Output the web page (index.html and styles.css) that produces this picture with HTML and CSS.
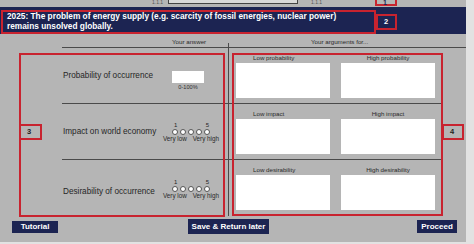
FILE: index.html
```html
<!DOCTYPE html>
<html>
<head>
<meta charset="utf-8">
<link rel="stylesheet" href="styles.css">
</head>
<body>
<div class="page">
  <div class="prev">
    <span class="prev-dots">1.1.1</span>
    <span class="prev-box"></span>
    <span class="prev-dots">1.1.1</span>
  </div>
  <div class="banner">
    <p class="question">2025: The problem of energy supply (e.g. scarcity of fossil energies, nuclear power)<br>remains unsolved globally.</p>
  </div>
  <div class="main">
    <div class="head head-left">Your answer</div>
    <div class="divider"></div>
    <div class="head head-right">Your arguments for...</div>

    <div class="answers">
      <div class="row r1">
        <span class="label">Probability of occurrence</span>
        <div class="widget">
          <div class="pct-box"></div>
          <div class="pct-label">0-100%</div>
        </div>
      </div>
      <div class="row r2">
        <span class="label">Impact on world economy</span>
        <div class="widget scale">
          <div class="ends"><span>1</span><span>5</span></div>
          <div class="dots"><i></i><i></i><i></i><i></i><i></i></div>
          <div class="names"><span>Very low</span><span>Very high</span></div>
        </div>
      </div>
      <div class="row r3">
        <span class="label">Desirability of occurrence</span>
        <div class="widget scale">
          <div class="ends"><span>1</span><span>5</span></div>
          <div class="dots"><i></i><i></i><i></i><i></i><i></i></div>
          <div class="names"><span>Very low</span><span>Very high</span></div>
        </div>
      </div>
    </div>

    <div class="args">
      <div class="arow">
        <div class="acell"><div class="alabel lo">Low probability</div><div class="abox"></div></div>
        <div class="acell"><div class="alabel hi">High probability</div><div class="abox"></div></div>
      </div>
      <div class="arow">
        <div class="acell"><div class="alabel lo">Low impact</div><div class="abox"></div></div>
        <div class="acell"><div class="alabel hi">High impact</div><div class="abox"></div></div>
      </div>
      <div class="arow last">
        <div class="acell"><div class="alabel lo">Low desirability</div><div class="abox"></div></div>
        <div class="acell"><div class="alabel hi">High desirability</div><div class="abox"></div></div>
      </div>
    </div>
  </div>
  <div class="footer">
    <button class="btn btn-tutorial">Tutorial</button>
    <button class="btn btn-save">Save &amp; Return later</button>
    <button class="btn btn-proceed">Proceed</button>
  </div>

  <div class="anno anno-top"><span>1</span></div>
  <div class="anno anno-question"></div>
  <div class="anno tag tag-2">2</div>
  <div class="anno anno-left"></div>
  <div class="anno anno-right"></div>
  <div class="anno tag tag-3">3</div>
  <div class="anno tag tag-4">4</div>
</div>
</body>
</html>
```

FILE: styles.css
```css
html, body {
  margin: 0;
  padding: 0;
}
body {
  width: 474px;
  height: 244px;
  background: #e2e2e2;
  font-family: "Liberation Sans", Arial, sans-serif;
  color: #262626;
  overflow: hidden;
}
.page {
  position: relative;
  width: 466px;
  height: 242px;
  background: #b5b5b5;
  overflow: hidden;
}

/* partial previous row */
.prev {
  height: 7px;
  display: flex;
  align-items: flex-start;
  font-size: 5px;
  line-height: 4px;
  color: #555;
}
.prev-dots {
  margin-left: 152px;
  width: 14px;
}
.prev-box {
  margin-left: 2px;
  width: 128px;
  height: 3px;
  background: #d9d9d9;
  border: 1px solid #444;
  border-top: 0;
}
.prev-dots + .prev-box + .prev-dots {
  margin-left: 13px;
}

/* banner */
.banner {
  height: 27px;
  background: #1c2452;
  box-sizing: border-box;
  padding: 4px 0 0 7px;
}
.question {
  margin: 0;
  color: #fff;
  font-weight: bold;
  font-size: 8.3px;
  line-height: 10px;
}

/* main grid */
.main {
  display: grid;
  grid-template-columns: 228px 1px 237px;
  grid-template-rows: 14px 168px;
}
.head {
  box-sizing: border-box;
  height: 14px;
  border-bottom: 1px solid #4a4a4a;
  font-size: 6.2px;
  line-height: 15px;
  color: #2a2a2a;
}
.head-left {
  margin-left: 62px;
  padding-left: 110px;
}
.head-right {
  padding-left: 82px;
}
.divider {
  grid-column: 2;
  grid-row: 1 / 3;
  margin-top: 9px;
  background: #4a4a4a;
}
.answers {
  grid-column: 1;
  grid-row: 2;
  margin-left: 62px;
}
.row {
  box-sizing: border-box;
  height: 56px;
  border-bottom: 1px solid #4a4a4a;
  display: flex;
  align-items: flex-start;
  padding-left: 1px;
}
.r3 {
  border-bottom: 0;
}
.label {
  width: 98px;
  font-size: 8.2px;
  line-height: 10px;
  color: #262626;
}
.r1 .label, .r2 .label { margin-top: 23px; }
.r3 .label { margin-top: 27px; }

.widget {
  width: 58px;
  display: flex;
  flex-direction: column;
  align-items: center;
}
.r1 .widget { margin-top: 23px; margin-left: 10px; width: 34px; }
.pct-box {
  width: 32px;
  height: 12px;
  background: #fff;
}
.pct-label {
  font-size: 5.6px;
  line-height: 8px;
  color: #333;
}
.scale {
  margin-left: 2px;
  width: 56px;
}
.r2 .scale { margin-top: 18px; }
.r3 .scale { margin-top: 19px; }
.ends {
  align-self: stretch;
  display: flex;
  justify-content: space-between;
  padding: 0 10px 0 11px;
  font-size: 6px;
  line-height: 7px;
}
.dots {
  display: flex;
  gap: 2px;
  height: 6px;
}
.dots i {
  box-sizing: border-box;
  width: 6px;
  height: 6px;
  border-radius: 50%;
  background: #fff;
  border: 0.8px solid #555;
}
.names {
  align-self: stretch;
  display: flex;
  justify-content: space-between;
  font-size: 6.3px;
  line-height: 7px;
  color: #2a2a2a;
}

/* arguments */
.args {
  grid-column: 3;
  grid-row: 2;
}
.arow {
  box-sizing: border-box;
  width: 212px;
  height: 56px;
  border-bottom: 1px solid #4a4a4a;
  display: flex;
  gap: 11px;
  padding: 4.5px 0 0 7px;
}
.arow.last {
  border-bottom: 0;
}
.acell {
  width: 94px;
}
.alabel {
  font-size: 6.2px;
  line-height: 10px;
  color: #2a2a2a;
  white-space: nowrap;
}
.alabel.lo {
  padding-left: 17px;
}
.alabel.hi {
  text-align: center;
}
.abox {
  width: 94px;
  height: 35px;
  background: #fff;
}

/* footer */
.footer {
  display: flex;
  align-items: flex-start;
  padding: 3px 9px 0 12px;
}
.btn {
  border: 0;
  margin: 0;
  padding: 0;
  background: #1c2452;
  color: #fff;
  font-family: "Liberation Sans", Arial, sans-serif;
  font-weight: bold;
  font-size: 8px;
  line-height: 12px;
}
.btn-tutorial {
  margin-top: 2px;
  width: 46px;
  height: 12px;
}
.btn-save {
  margin-left: 130px;
  width: 81px;
  height: 15px;
  line-height: 15px;
}
.btn-proceed {
  margin-left: auto;
  margin-top: 1px;
  width: 40px;
  height: 13px;
  line-height: 13px;
}

/* annotations overlay */
.anno {
  position: absolute;
  box-sizing: border-box;
  border: 2px solid #c8232f;
}
.anno-top {
  left: 375px;
  top: -12px;
  width: 22px;
  height: 18px;
  font-size: 7px;
  font-weight: bold;
  color: #1c2452;
  line-height: 7px;
  padding: 9px 0 0 6px;
}
.anno-question {
  left: 1px;
  top: 10px;
  width: 375px;
  height: 24px;
}
.tag {
  font-size: 7.5px;
  font-weight: bold;
  line-height: 12px;
  padding-left: 6px;
}
.tag-2 {
  left: 376px;
  top: 14px;
  width: 21px;
  height: 16px;
  color: #fff;
}
.anno-left {
  left: 19px;
  top: 53px;
  width: 206px;
  height: 164px;
}
.anno-right {
  left: 232px;
  top: 53px;
  width: 211px;
  height: 163px;
}
.tag-3 {
  left: 19px;
  top: 124px;
  width: 23px;
  height: 16px;
  color: #222;
}
.tag-4 {
  left: 442px;
  top: 124px;
  width: 22px;
  height: 16px;
  color: #222;
}
```
